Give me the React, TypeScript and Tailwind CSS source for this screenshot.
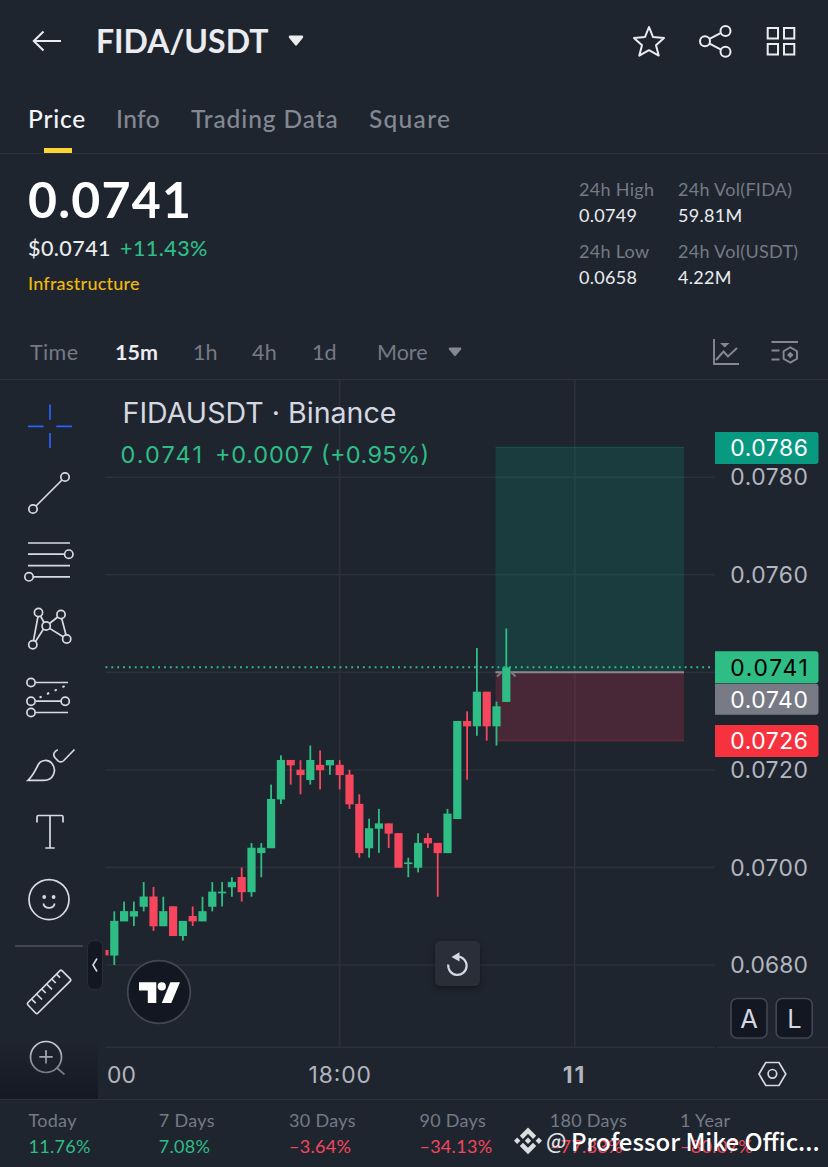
import type { ReactNode } from "react";

type Candle = [open: number, close: number, high: number, low: number];

// Values are ticks of 0.0001 above 0.0680.
const candles: Candle[] = [
  [2, 9, 11, 0], [9, 11, 13, 9], [10, 11, 13, 8], [12, 14, 17, 11], [14, 8, 16, 7],
  [8, 11, 14, 8], [12, 6, 12, 6], [6, 9, 9, 5], [10, 9, 12, 8], [9, 11, 14, 9],
  [12, 15, 17, 11], [15, 15, 17, 12], [16, 17, 18, 14], [18, 15, 20, 13], [15, 24, 25, 14],
  [23, 24, 25, 18], [24, 34, 37, 24], [34, 42, 43, 33], [42, 41, 42, 37], [40, 39, 42, 35],
  [38, 42, 45, 37], [41, 40, 44, 36], [41, 42, 42, 39], [41, 39, 42, 36], [39, 33, 40, 32],
  [33, 23, 35, 22], [24, 28, 30, 22], [28, 29, 32, 23], [29, 27, 29, 24], [27, 20, 27, 20],
  [21, 21, 22, 18], [20, 25, 27, 19], [26, 25, 27, 24], [25, 23, 25, 14], [23, 31, 32, 23],
  [30, 50, 50, 30], [50, 49, 52, 38], [49, 56, 65, 47], [56, 49, 56, 46], [49, 53, 54, 45],
  [54, 61, 69, 54],
];

const tickY = (n: number) => 965 - n * 4.877;

const GREEN = "#2ebd85";
const RED = "#f6465d";

function Chart() {
  return (
    <svg width="730" height="719" viewBox="98 380 730 719" className="block shrink-0 font-['Inter',sans-serif]">
      <g stroke="#2b303a" strokeWidth="1.6">
        {[477.3, 574.8, 672.4, 770, 867.4, 965].map((y) => (
          <line key={y} x1="105.5" x2="715" y1={y} y2={y} />
        ))}
        <line x1="339.7" x2="339.7" y1="380" y2="1047" />
        <line x1="574.8" x2="574.8" y1="380" y2="1047" />
        <line x1="105.5" x2="715" y1="1047.3" y2="1047.3" />
        <line x1="717" x2="828" y1="1047.3" y2="1047.3" />
      </g>

      <rect x="495.5" y="447" width="188.5" height="225" fill="#089981" fillOpacity="0.2" />
      <rect x="495.5" y="672" width="188.5" height="69.3" fill="#f23655" fillOpacity="0.2" />
      <path d="M495.5 447.3H684" stroke="#089981" strokeOpacity=".25" />
      <path d="M495.5 740.5H684" stroke="#f23645" strokeOpacity=".15" strokeWidth="1.5" />

      <line x1="105.5" x2="712" y1="667.2" y2="667.2" stroke={GREEN} strokeWidth="1.9" strokeDasharray="1.9 3.95" />

      <rect x="105.5" y="950" width="3" height="5.4" fill={RED} />
      {candles.map(([o, c, h, l], i) => {
        const x = 114.3 + i * 9.8;
        const top = tickY(Math.max(o, c));
        const height = Math.max(Math.abs(o - c) * 4.877, 1.2);
        const fill = c >= o ? GREEN : RED;
        return (
          <g key={i} fill={fill}>
            <rect x={x - 0.9} y={tickY(h)} width="1.8" height={(h - l) * 4.877} />
            <rect x={x - 4.1} y={top - 0.2} width="8.2" height={height + 0.5} />
          </g>
        );
      })}
      <path d="M495.5 672.2H502M510.6 672.2H684" stroke="#8b8791" strokeWidth="1.9" />
      <path d="M497 676.5L501.5 672.5M511 672L515.5 676.5" stroke="#787b86" strokeWidth="1.8" />

      <text x="122.500" y="422.500" fontSize="28.6" fill="#d5d8e0" textLength="274" lengthAdjust="spacing">FIDAUSDT · Binance</text>
      <g fontSize="23.5" fill={GREEN}>
        <text x="120.5" y="463" textLength="81.5">0.0741</text>
        <text x="215" y="463" textLength="98">+0.0007</text>
        <text x="321" y="463" textLength="108">(+0.95%)</text>
      </g>

      <path d="M715 432h100.500a3 3 0 0 1 3 3v26a3 3 0 0 1-3 3H715z" fill="#089981" />
      <path d="M715 651.300h100.500a3 3 0 0 1 3 3v26a3 3 0 0 1-3 3H715z" fill={GREEN} />
      <path d="M715 683.800h100.500a3 3 0 0 1 3 3v25a3 3 0 0 1-3 3H715z" fill="#787b86" />
      <path d="M715 725h100.500a3 3 0 0 1 3 3v26a3 3 0 0 1-3 3H715z" fill="#f6323f" />
      <g fontSize="22.8">
        {[
          ["0.0786", 456.3, "#fff"], ["0.0780", 485.3, "#b2b5be"], ["0.0760", 583, "#b2b5be"],
          ["0.0741", 676.3, "#000"], ["0.0740", 708, "#fff"], ["0.0726", 749.3, "#fff"],
          ["0.0720", 778.3, "#b2b5be"], ["0.0700", 875.6, "#b2b5be"], ["0.0680", 973.3, "#b2b5be"],
        ].map(([label, y, fill]) => (
          <text key={label} x="730.300" y={y} fill={String(fill)} textLength="77.500">{label}</text>
        ))}
        <text x="107" y="1083" fill="#b2b5be" textLength="29">00</text>
        <text x="308.500" y="1083" fill="#b2b5be" textLength="62.500">18:00</text>
        <text x="574.500" y="1083" fill="#b2b5be" fontWeight="700" textAnchor="middle" letterSpacing="1.800">11</text>
      </g>

      <g fill="#131722" stroke="#434651" strokeWidth="1.600">
        <rect x="731" y="998.500" width="36" height="39.500" rx="6" />
        <rect x="776.200" y="998.500" width="36" height="39.500" rx="6" />
      </g>
      <g fontSize="25.500" fill="#d5d8e0" textAnchor="middle">
        <text x="749" y="1028">A</text>
        <text x="794.500" y="1028">L</text>
      </g>

      <g fill="none" stroke="#d5d8e0" strokeWidth="1.700">
        <path d="M765.800 1062.500H779L785.800 1074L779 1085.500H765.800L759 1074Z" />
        <circle cx="772.400" cy="1073.800" r="4.300" />
      </g>

      <circle cx="159" cy="992" r="31.300" fill="#131722" stroke="#434651" strokeWidth="1.800" />
      <g fill="#fff">
        <path d="M139 982.300H156.300V1003H147.800V990.500H139Z" />
        <circle cx="161.800" cy="986.400" r="4.100" />
        <path d="M170.300 982.300H180L171.300 1003H161.800Z" />
      </g>

      <rect x="435" y="941" width="45" height="45" rx="5" fill="#2a2e39" className="drop-shadow-[0_2px_3px_rgba(0,0,0,0.4)]" />
      <path d="M448.300 964.500A9.200 9.200 0 1 0 457.500 956.500" fill="none" stroke="#d5d8e0" strokeWidth="2.200" />
      <path d="M451.500 957L459.500 952.300V961.500Z" fill="#d5d8e0" />
    </svg>
  );
}

function Tool({ children, color = "#d8dae2" }: { children: ReactNode; color?: string }) {
  return (
    <svg width="98" height="68" viewBox="0 0 98 68" fill="none" stroke={color} strokeWidth="1.7" className="block shrink-0">
      {children}
    </svg>
  );
}

function Toolbar() {
  return (
    <div className="relative flex h-[719px] w-[98px] shrink-0 flex-col pt-[13px]">
      <Tool color="#2962ff">
        <path d="M28 33.300H43.600M56.300 33.300H72M50 11.500V26.700M50 40V55" />
      </Tool>
      <Tool>
        <circle cx="65" cy="16" r="4.200" />
        <circle cx="33" cy="48" r="4.200" />
        <path d="M36 45L62 19" />
      </Tool>
      <Tool>
        <path d="M28 14H70M28 25.200H64.500M28 36.600H70M33.500 47.800H70" />
        <circle cx="68.800" cy="25.200" r="4.200" />
        <circle cx="29" cy="47.800" r="4.200" />
      </Tool>
      <Tool>
        <circle cx="38.500" cy="15.500" r="4.100" />
        <circle cx="61" cy="17.500" r="4.100" />
        <circle cx="46.200" cy="29" r="4.100" />
        <circle cx="66.700" cy="42" r="4.100" />
        <circle cx="32.800" cy="47.700" r="4.100" />
        <path d="M38 19.500L33.500 43.500M40.500 19L44 25.500M43.500 32L35.500 44.500M49.500 26.500L57.700 20M49.600 31.400L63.200 39.800M61.700 21.500L66 38" />
      </Tool>
      <Tool>
        <circle cx="31" cy="17.500" r="4.100" />
        <circle cx="31" cy="36.200" r="4.100" />
        <circle cx="65.200" cy="36.200" r="4.100" />
        <circle cx="31" cy="47.500" r="4.100" />
        <path d="M35.200 17.500H68M35.200 36.200H61M35.200 47.500H68" />
        <path d="M39.500 32.500L41.700 31.600M47 29L49.200 28M54.600 25.700L56.800 24.700M62.400 22.200L64.600 21.200" strokeWidth="2" />
      </Tool>
      <Tool>
        <path d="M28 47.300C33.500 42 36 36 38 32C41 26.500 48 26 52 30.500C57.500 37.500 53 47.300 44 47.300Z" />
        <path d="M57.800 16.800C54 18.500 52.500 21.500 55 24.800L58 27.800Q61 30.300 63.800 27.500L74.500 16.500" />
      </Tool>
      <Tool>
        <path d="M37 21.500V16Q37 14.500 38.500 14.500H61.500Q63 14.500 63 16V21.500M50 14.500V47M45.300 47H54.700" />
      </Tool>
      <Tool>
        <circle cx="49" cy="30.600" r="20" />
        <circle cx="44.200" cy="28" r="1.900" fill="#d8dae2" stroke="none" />
        <circle cx="53.600" cy="28" r="1.900" fill="#d8dae2" stroke="none" />
        <path d="M43.300 34.500C44.500 40.300 53.500 40.300 54.700 34.500" />
      </Tool>
      <div className="mt-2 ml-[15px] h-[2px] w-[68px] shrink-0 bg-[#434651]" />
      <div className="h-[11px] shrink-0" />
      <Tool>
        <path d="M28 44.500L59.800 12.800Q61 11.600 62.200 12.800L70.200 20.800Q71.400 22 70.200 23.200L38 55Q36.800 56.200 35.600 55L28 47Q26.800 45.700 28 44.500Z" />
        <path d="M31.500 41L35.700 45.200M36.500 36L42 41.500M41.700 31L45.700 35M46.600 26L52 31.400M51.700 21L55.700 25M56.500 16.200L60 19.700" />
      </Tool>
      <Tool>
        <circle cx="46" cy="31" r="15.500" />
        <path d="M39.300 30.800H52.700M46 24.200V37.500M57 42L64.500 48.500" />
      </Tool>
      <div className="absolute inset-x-0 bottom-0 h-[60px] bg-linear-to-b from-[#131722]/0 to-[#131722]/90" />
      <div className="absolute top-[560px] left-[87px] z-10 flex h-[50px] w-[16px] items-center justify-center rounded-[7px] border border-[#2a2e39] bg-[#131722]">
        <svg width="8" height="16" viewBox="0 0 8 16" fill="none" stroke="#d5d8e0" strokeWidth="1.600">
          <path d="M6 1.500L2 8L6 14.500" />
        </svg>
      </div>
    </div>
  );
}

function Header() {
  return (
    <header className="flex h-[84px] items-center pb-[2px] pl-[32px]">
      <svg width="30" height="24" viewBox="0 0 30 24" fill="none" stroke="#eaecef" strokeWidth="2">
        <path d="M1.500 12H29M11.500 2.500L1.800 12L11.500 21.500" />
      </svg>
      <h1 className="ml-[34px] w-[175px] text-[32px] leading-10 font-bold whitespace-nowrap text-[#eaecef]">FIDA/USDT</h1>
      <svg width="16" height="12" viewBox="0 0 16 12" fill="#eaecef" className="ml-[17px]">
        <path d="M2 0.500H14Q16 1 14.800 3L9 10Q8 11.300 7 10L1.200 3Q0 1 2 0.500Z" />
      </svg>
      <svg width="166" height="36" viewBox="0 0 166 36" fill="none" stroke="#eaecef" strokeWidth="2" className="ml-[328px]">
        <path strokeLinejoin="round" d="M17 4L21 14L32 15L24 22.200L26.700 32.600L17 27.200L7.300 32.600L10 22.200L2 15L13 14Z" />
        <circle cx="73" cy="18.200" r="5" />
        <circle cx="93.500" cy="8" r="5" />
        <circle cx="93.500" cy="28.700" r="5" />
        <path d="M77.500 15.900L89 9.900M77.500 20.700L89 26.700" />
        <path d="M135.700 5H146V15.500H135.700ZM152 5H162.300V15.500H152ZM135.700 21H146V31.500H135.700ZM152 21H162.300V31.500H152Z" />
      </svg>
    </header>
  );
}

function Tabs() {
  return (
    <nav className="flex h-[70px] border-b border-[#2b303a] pl-[28px] text-[24.500px] leading-[70px] font-medium whitespace-nowrap text-[#848893]">
      <div className="relative w-[88px] tracking-[0.8px] text-[#f5f6f8]">
        Price
        <span className="absolute bottom-0 left-[16px] h-[5px] w-[28px] bg-[#fcd535]" />
      </div>
      <div className="w-[75px] tracking-[0.4px]">Info</div>
      <div className="w-[178px] tracking-[0.9px]">Trading Data</div>
      <div className="tracking-[1.300px]">Square</div>
    </nav>
  );
}

function Stat({ label, value }: { label: string; value: string }) {
  return (
    <div className="h-[62px] whitespace-nowrap">
      <div className="text-[18px] leading-[26px] tracking-[0.3px] text-[#757a85]">{label}</div>
      <div className="text-[18px] leading-[27px] tracking-[0.3px] text-[#eaecef]">{value}</div>
    </div>
  );
}

function Summary() {
  return (
    <section className="flex h-[171px] justify-between pl-[28px] whitespace-nowrap">
      <div className="pt-[15px]">
        <div className="h-[60px] text-[50px] leading-[60px] font-bold tracking-[1.200px] text-white">0.0741</div>
        <div className="mt-[4px] flex h-[30px] text-[21.500px] leading-[30px] font-medium tracking-[0.450px]">
          <span className="w-[92px] text-[#eaecef]">$0.0741</span>
          <span className="text-[#2ebd85]">+11.43%</span>
        </div>
        <div className="mt-[7px] text-[18px] leading-[26px] font-medium tracking-[0.220px] text-[#f0b90b]">Infrastructure</div>
      </div>
      <div className="grid w-[249px] grid-cols-[99px_150px] content-start pt-[22px]">
        <Stat label="24h High" value="0.0749" />
        <Stat label="24h Vol(FIDA)" value="59.81M" />
        <Stat label="24h Low" value="0.0658" />
        <Stat label="24h Vol(USDT)" value="4.22M" />
      </div>
    </section>
  );
}

function Intervals() {
  return (
    <section className="flex h-[55px] items-center border-b border-[#2b303a] pl-[30px] text-[21.500px] leading-[54px] whitespace-nowrap text-[#757a85]">
      <div className="w-[85px] tracking-[0.4px]">Time</div>
      <div className="w-[78px] font-bold text-[#eaecef]">15m</div>
      <div className="w-[59px]">1h</div>
      <div className="w-[60px] tracking-[0.3px]">4h</div>
      <div className="w-[65px]">1d</div>
      <div className="w-[71px]">More</div>
      <svg width="14" height="10" viewBox="0 0 14 10" fill="#848893">
        <path d="M1.500 0.500H12.500Q14 1 13 2.500L8 8.600Q7 9.700 6 8.600L1 2.500Q0 1 1.500 0.500Z" />
      </svg>
      <svg width="88" height="28" viewBox="0 0 88 28" fill="none" stroke="#848893" strokeWidth="1.900" className="ml-[250px]">
        <path d="M2 1V26H27M4 22L11.500 13.500L16 18.500L25 10" />
        <path d="M8 5H17.500L12.800 9.500Z" fill="#848893" stroke="none" />
        <path d="M59.500 4H86M59.500 12.500H67.500M59.500 21.500H67.500" />
        <path d="M78.300 9.300L85 13.200V20.700L78.300 24.600L71.600 20.700V13.200Z" />
        <path d="M78.300 13.800L81.500 17L78.300 20.200L75.100 17Z" fill="#848893" stroke="none" />
      </svg>
    </section>
  );
}

const periods = [
  { label: "Today", value: "11.76%", up: true },
  { label: "7 Days", value: "7.08%", up: true },
  { label: "30 Days", value: "–3.64%", up: false },
  { label: "90 Days", value: "–34.13%", up: false },
  { label: "180 Days", value: "–77.83%", up: false },
  { label: "1 Year", value: "–80.07%", up: false },
];

function Footer() {
  return (
    <footer className="relative h-[68px] border-t border-[#2b303a] pl-[28.500px]">
      <div className="grid grid-cols-[repeat(6,130.3px)] pt-[7px] whitespace-nowrap">
        {periods.map((p) => (
          <div key={p.label} className="text-[18px] leading-[26px] tracking-[0.3px]">
            <div className="text-[#757a85]">{p.label}</div>
            <div className={p.up ? "text-[#2ebd85]" : "text-[#f6465d]"}>{p.value}</div>
          </div>
        ))}
      </div>
      <div className="absolute top-[23px] left-[514px] flex items-center gap-[4px]">
        <svg width="28" height="28" viewBox="0 0 29 29" fill="#d9dde0">
          <path d="M14.500 0.500L23 9L19.700 12.300L14.500 7.100L9.300 12.300L6 9ZM3.300 11L6.600 14.300L3.300 17.600L0 14.300ZM14.500 11L17.800 14.300L14.500 17.600L11.200 14.300ZM25.700 11L29 14.300L25.700 17.600L22.400 14.300ZM9.300 16.300L14.500 21.500L19.700 16.300L23 19.600L14.500 28.100L6 19.600Z" />
        </svg>
        <div className="flex h-[36px] items-center font-['Noto_Sans_CJK_SC',sans-serif] text-[24px] font-medium whitespace-nowrap text-white">
          <span className="w-[25px] text-[21px] text-[#e0e3e6]">@</span>
          <span>Professor Mike Offic...</span>
        </div>
      </div>
    </footer>
  );
}

export default function App() {
  return (
    <main className="flex h-[1167px] w-[828px] flex-col overflow-hidden bg-[#1f252f] font-['Lato',sans-serif]">
      <Header />
      <Tabs />
      <Summary />
      <Intervals />
      <div className="flex h-[719px] shrink-0">
        <Toolbar />
        <Chart />
      </div>
      <Footer />
    </main>
  );
}
